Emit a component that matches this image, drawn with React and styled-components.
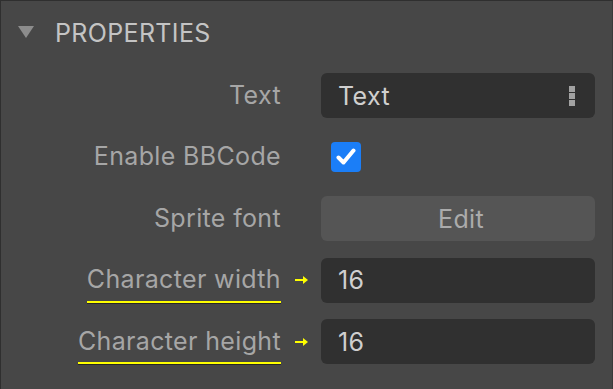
import React from 'react'
import styled, { createGlobalStyle } from 'styled-components'

const GlobalStyle = createGlobalStyle`
  html, body {
    margin: 0;
    padding: 0;
    background: #474747;
  }
  body {
    font-family: Inter, "Liberation Sans", sans-serif;
  }
`

const Panel = styled.section`
  box-sizing: border-box;
  width: 613px;
  height: 389px;
  background: #474747;
  border-top: 1px solid #2f2f2f;
  border-left: 1px solid #2f2f2f;
  border-right: 1px solid #3a3a3a;
  padding: 0 17px 0 17px;
`

const Header = styled.div`
  display: flex;
  align-items: center;
  gap: 21px;
  height: 64px;
  margin-bottom: 8px;
  color: #c4c4c4;
  font-size: 25px;
  letter-spacing: 0.35px;
`

const Caret = styled.span`
  width: 0;
  height: 0;
  border-left: 8.5px solid transparent;
  border-right: 8.5px solid transparent;
  border-top: 12px solid #8c8c8c;
  margin-top: -3px;
`

const Rows = styled.div`
  display: grid;
  grid-template-columns: 1fr 40px 274px;
  grid-auto-rows: 45px;
  row-gap: 16.5px;
  align-items: center;
`

const Label = styled.span`
  justify-self: end;
  box-sizing: border-box;
  height: 45px;
  display: inline-flex;
  align-items: center;
  color: #a6a6a6;
  font-size: 25px;
  letter-spacing: 0.35px;
  white-space: nowrap;
  border-bottom: 2px solid ${p => (p.$linked ? '#ffff00' : 'transparent')};
  box-shadow: ${p => (p.$linked ? '0 1px 0 rgba(0,0,0,0.45)' : 'none')};
`

const Link = styled.span`
  display: flex;
  justify-content: center;
  align-items: center;
`

const Field = styled.div`
  box-sizing: border-box;
  height: 45px;
  display: flex;
  align-items: center;
  justify-content: space-between;
  padding: 0 20px 0 17px;
  border-radius: 6px;
  background: #303030;
  color: #cfcfcf;
  font-size: 25px;
  letter-spacing: 0.35px;
`

const Kebab = styled.span`
  display: flex;
  flex-direction: column;
  gap: 1px;
  span {
    width: 6px;
    height: 6px;
    background: #a2a2a2;
  }
`

const Button = styled.button`
  box-sizing: border-box;
  height: 45px;
  border: none;
  border-radius: 6px;
  background: #555555;
  color: #ababab;
  font-family: inherit;
  font-size: 25px;
  letter-spacing: 0.35px;
  padding: 0 0 0 6px;
`

const Check = styled.span`
  width: 30px;
  height: 30px;
  margin-left: 10px;
  border-radius: 4px;
  background: #1b7ef7;
  display: flex;
  align-items: center;
  justify-content: center;
`

const Arrow = () => (
  <svg width="13" height="8" viewBox="0 0 13 8">
    <path d="M0 3h8V0l5 4-5 4V5H0z" fill="#ffff00" />
  </svg>
)

const rows = [
  { label: 'Text', kind: 'select', value: 'Text' },
  { label: 'Enable BBCode', kind: 'check' },
  { label: 'Sprite font', kind: 'button', value: 'Edit' },
  { label: 'Character width', kind: 'field', value: '16', linked: true },
  { label: 'Character height', kind: 'field', value: '16', linked: true },
]

const Control = ({ row }) => {
  if (row.kind === 'check') {
    return (
      <div>
        <Check>
          <svg width="20" height="18" viewBox="0 0 20 18">
            <path d="M2.5 9.5l5 5L17.5 2.5" fill="none" stroke="#fff" strokeWidth="4" strokeLinecap="round" strokeLinejoin="round" />
          </svg>
        </Check>
      </div>
    )
  }
  if (row.kind === 'button') return <Button>{row.value}</Button>
  return (
    <Field>
      {row.value}
      {row.kind === 'select' && (
        <Kebab>
          <span />
          <span />
          <span />
        </Kebab>
      )}
    </Field>
  )
}

const App = () => (
  <>
    <GlobalStyle />
    <Panel>
      <Header>
        <Caret />
        PROPERTIES
      </Header>
      <Rows>
        {rows.map(row => (
          <React.Fragment key={row.label}>
            <Label $linked={row.linked}>{row.label}</Label>
            <Link>{row.linked && <Arrow />}</Link>
            <Control row={row} />
          </React.Fragment>
        ))}
      </Rows>
    </Panel>
  </>
)

export default App
